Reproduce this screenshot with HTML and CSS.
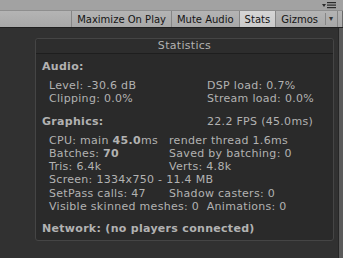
FILE: index.html
```html
<!DOCTYPE html>
<html lang="en">
<head>
    <meta charset="UTF-8">
    <title>Game View Statistics</title>
    <link rel="stylesheet" href="styles.css">
</head>
<body>
    <div class="titlebar">
        <svg class="tab-menu" width="16" height="8" viewBox="0 0 16 8">
            <path d="M1 3 L5 3 L3 6 Z" fill="#2a2a2a"/>
            <rect x="6" y="1" width="9" height="1.2" fill="#2a2a2a"/>
            <rect x="6" y="3.5" width="9" height="1.2" fill="#2a2a2a"/>
            <rect x="6" y="6" width="9" height="1.2" fill="#2a2a2a"/>
        </svg>
    </div>

    <div class="toolbar">
        <div class="spacer"></div>
        <div class="tb-button">Maximize On Play</div>
        <div class="tb-button">Mute Audio</div>
        <div class="tb-button active">Stats</div>
        <div class="tb-button gizmos">Gizmos<span class="drop">&#9662;</span></div>
        <div class="tb-end"></div>
    </div>

    <div class="view">
        <div class="game">
            <div class="stats">
                <div class="stats-header">Statistics</div>
                <div class="stats-body">
                    <div class="section">
                        <div class="title">Audio:</div>
                        <div class="row audio"><span>Level: -30.6 dB</span><span>DSP load: 0.7%</span></div>
                        <div class="row audio"><span>Clipping: 0.0%</span><span>Stream load: 0.0%</span></div>
                    </div>
                    <div class="section">
                        <div class="title-row"><span class="label">Graphics:</span><span class="fps">22.2 FPS (45.0ms)</span></div>
                        <div class="row gfx"><span>CPU: main <b>45.0</b>ms</span><span>render thread 1.6ms</span></div>
                        <div class="row gfx"><span>Batches: <b>70</b></span><span>Saved by batching: 0</span></div>
                        <div class="row gfx"><span>Tris: 6.4k</span><span>Verts: 4.8k</span></div>
                        <div class="row"><span>Screen: 1334x750 - 11.4 MB</span></div>
                        <div class="row gfx"><span>SetPass calls: 47</span><span>Shadow casters: 0</span></div>
                        <div class="row"><span>Visible skinned meshes: 0&nbsp;&nbsp;Animations: 0</span></div>
                    </div>
                    <div class="title">Network: (no players connected)</div>
                </div>
            </div>
        </div>
        <div class="edge"></div>
    </div>
</body>
</html>
```

FILE: styles.css
```css
body {
    margin: 0;
    width: 343px;
    height: 258px;
    overflow: hidden;
    background-color: #313131;
    font-family: 'DejaVu Sans', Verdana, sans-serif;
    display: flex;
    flex-direction: column;
}
.titlebar {
    height: 10px;
    background-color: #a2a2a2;
    display: flex;
    justify-content: flex-end;
    align-items: center;
    padding-right: 6px;
}
.tab-menu {
    display: block;
}
.toolbar {
    height: 16px;
    display: flex;
    background: linear-gradient(#b4b4b4, #a8a8a8);
    border-top: 1px solid #8e8e8e;
    border-bottom: 1px solid #1f1f1f;
    font-size: 10px;
    color: #141414;
}
.spacer {
    flex: 1;
}
.tb-button {
    display: flex;
    align-items: center;
    padding: 0 5px 0 5px;
    border-left: 1px solid #868686;
}
.tb-button.active {
    background: linear-gradient(#d6d6d6, #cacaca);
}
.gizmos {
    padding-right: 0;
}
.drop {
    margin-left: 7px;
    padding-left: 3px;
    width: 8px;
    border-left: 1px solid #868686;
    font-size: 8px;
    line-height: 12px;
    color: #333;
}
.tb-end {
    width: 4px;
    border-left: 1px solid #868686;
    border-right: 1px solid #6a6a6a;
}
.view {
    flex: 1;
    display: flex;
}
.game {
    flex: 1;
    padding: 10px 4px 0 35px;
}
.edge {
    width: 4px;
    background-color: #5a5a5a;
    border-left: 1px solid #262626;
}
.stats {
    height: 201px;
    background-color: #2a2a2a;
    border: 1px solid #454545;
    border-radius: 3px;
    color: #b2b2b2;
    font-size: 11px;
    line-height: 13.2px;
}
.stats-header {
    height: 14px;
    line-height: 14px;
    text-align: center;
    border-bottom: 1px solid #1e1e1e;
    background-color: #2d2d2d;
    border-radius: 3px 3px 0 0;
    letter-spacing: 0.3px;
}
.stats-body {
    padding: 6px 0 0 6px;
}
.title,
.label {
    font-weight: bold;
    letter-spacing: 0.3px;
}
.title-row {
    display: flex;
}
.label {
    width: 165px;
}
.section {
    margin-bottom: 9px;
}
.section .title,
.section .title-row {
    margin-bottom: 6px;
}
.row {
    display: flex;
    padding-left: 7px;
    letter-spacing: 0.3px;
}
.audio span:first-child {
    width: 158px;
}
.gfx span:first-child {
    width: 120px;
}
.fps {
    letter-spacing: 0.3px;
}
```
